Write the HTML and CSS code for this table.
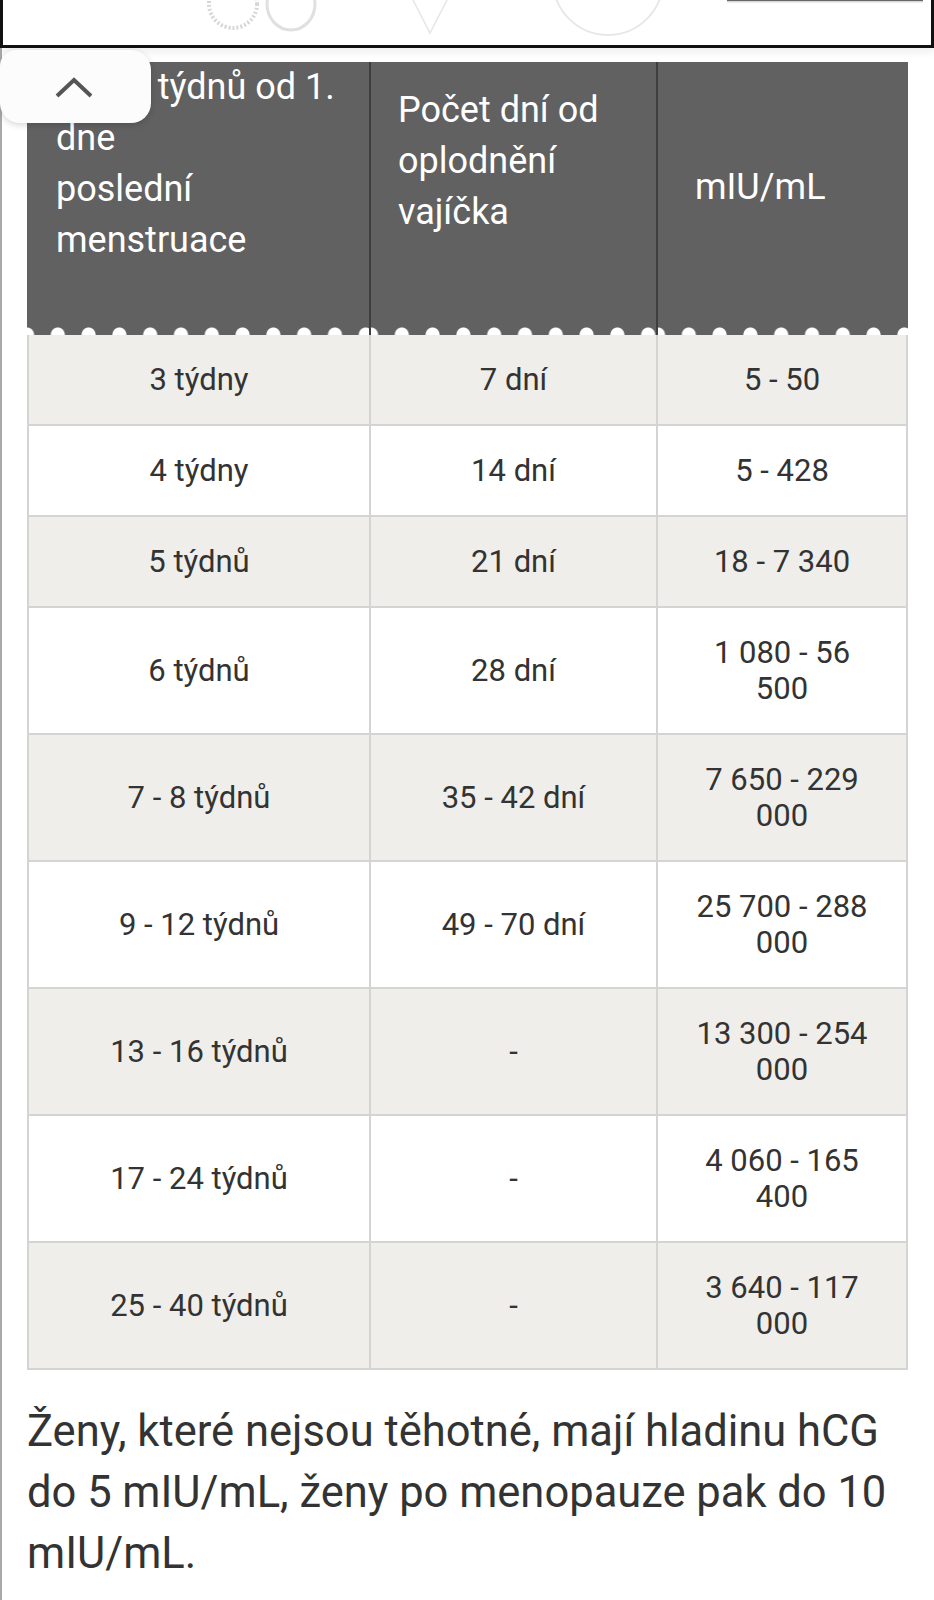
FILE: index.html
```html
<!DOCTYPE html>
<html lang="cs">
<head>
<meta charset="utf-8">
<title>hCG tabulka</title>
<link rel="stylesheet" href="styles.css">
</head>
<body>
<div class="frame">
  <svg class="sketch" width="928" height="45" viewBox="0 0 928 45" aria-hidden="true">
    <circle cx="230" cy="4" r="24" fill="none" stroke="#d6d6d6" stroke-width="4" stroke-dasharray="2 2"/>
    <ellipse cx="288" cy="4" rx="24" ry="26" fill="none" stroke="#e0e0e0" stroke-width="3"/>
    <polyline points="410,0 427,33 444,0" fill="none" stroke="#e6e6e6" stroke-width="1.5"/>
    <circle cx="605" cy="-20" r="55" fill="none" stroke="#e8e8e8" stroke-width="2"/>
    <line x1="724" y1="0.5" x2="920" y2="0.5" stroke="#666" stroke-width="1.5"/>
    <line x1="724" y1="2" x2="920" y2="2" stroke="#d8d8d8" stroke-width="1"/>
  </svg>
</div>
<main class="page">
  <button class="collapse" type="button" aria-label="Sbalit">
    <svg width="40" height="24" viewBox="0 0 40 24"><polyline points="3,20 20,4 37,20" fill="none" stroke="#555" stroke-width="4"/></svg>
  </button>
  <table class="hcg">
    <colgroup>
      <col class="c1"><col class="c2"><col class="c3">
    </colgroup>
    <thead>
      <tr class="head">
        <th class="h1">Počet týdnů od 1.<br>dne<br>poslední<br>menstruace</th>
        <th class="h2">Počet dní od<br>oplodnění<br>vajíčka</th>
        <th class="h3">mIU/mL</th>
      </tr>
    </thead>
    <tbody>
      <tr><td>3 týdny</td><td>7 dní</td><td>5 - 50</td></tr>
      <tr><td>4 týdny</td><td>14 dní</td><td>5 - 428</td></tr>
      <tr><td>5 týdnů</td><td>21 dní</td><td>18 - 7 340</td></tr>
      <tr><td>6 týdnů</td><td>28 dní</td><td>1 080 - 56 500</td></tr>
      <tr><td>7 - 8 týdnů</td><td>35 - 42 dní</td><td>7 650 - 229 000</td></tr>
      <tr><td>9 - 12 týdnů</td><td>49 - 70 dní</td><td>25 700 - 288 000</td></tr>
      <tr><td>13 - 16 týdnů</td><td>-</td><td>13 300 - 254 000</td></tr>
      <tr><td>17 - 24 týdnů</td><td>-</td><td>4 060 - 165 400</td></tr>
      <tr><td>25 - 40 týdnů</td><td>-</td><td>3 640 - 117 000</td></tr>
    </tbody>
  </table>
  <p class="note">Ženy, které nejsou těhotné, mají hladinu hCG do 5 mIU/mL, ženy po menopauze pak do 10 mIU/mL.</p>
</main>
</body>
</html>
```

FILE: styles.css
```css
html, body {
  margin: 0;
  padding: 0;
  background: #fff;
}
body {
  font-family: Roboto, "Noto Sans", "Liberation Sans", sans-serif;
  width: 934px;
  min-height: 1600px;
  overflow: hidden;
}
.frame {
  height: 45px;
  border: 3px solid #111;
  border-top: none;
  background: #fff;
  box-shadow: 0 4px 8px rgba(0, 0, 0, 0.07);
  position: relative;
  z-index: 1;
}
.sketch {
  display: block;
}
.page {
  position: relative;
  border-left: 2px solid #a9a9a9;
  padding: 14px 0 40px 25px;
  min-height: 1500px;
}
.collapse {
  position: absolute;
  top: 2px;
  left: -2px;
  width: 151px;
  height: 73px;
  border: none;
  margin: 0;
  padding: 0;
  background: #fcfcfc;
  border-radius: 16px 20px 20px 20px;
  box-shadow: 0 2px 6px rgba(0, 0, 0, 0.16);
  z-index: 2;
  display: flex;
  align-items: flex-start;
  justify-content: flex-start;
}
.collapse svg {
  display: block;
  margin: 26px 0 0 54px;
}
.hcg {
  border-collapse: separate;
  border-spacing: 0;
  table-layout: fixed;
  width: 881px;
}
.c1 { width: 344px; }
.c2 { width: 287px; }
.c3 { width: 250px; }
.head {
  height: 273px;
}
.hcg th {
  box-sizing: border-box;
  vertical-align: top;
  text-align: left;
  font-weight: 400;
  font-size: 36px;
  line-height: 51px;
  color: #fff;
  padding: 0 0 8px 0;
  background:
    radial-gradient(ellipse 7.5px 8px at 50% 100%, #fff 88%, rgba(255, 255, 255, 0) 100%) -15.4px 100% / 30.8px 8px repeat-x,
    #616161;
}
.hcg th.h1 {
  padding-left: 29px;
  border-right: 2px solid #3e3e3e;
}
.hcg th.h2 {
  padding-top: 23px;
  padding-left: 27px;
  border-right: 2px solid #3e3e3e;
}
.hcg th.h3 {
  padding-top: 100px;
  padding-left: 37px;
}
.hcg td {
  box-sizing: border-box;
  font-size: 31px;
  line-height: 36px;
  color: #333;
  text-align: center;
  vertical-align: middle;
  padding: 26.5px 30px;
  border-right: 2px solid #d4d4d2;
  border-bottom: 2px solid #d4d4d2;
}
.hcg td:first-child {
  border-left: 2px solid #d4d4d2;
}
.hcg tbody tr:nth-child(odd) td {
  background: #efeeea;
}
.hcg tbody tr:nth-child(even) td {
  background: #fff;
}
.note {
  margin: 31px 0 0 0;
  width: 881px;
  font-size: 43.5px;
  line-height: 61px;
  color: #333;
}
```
